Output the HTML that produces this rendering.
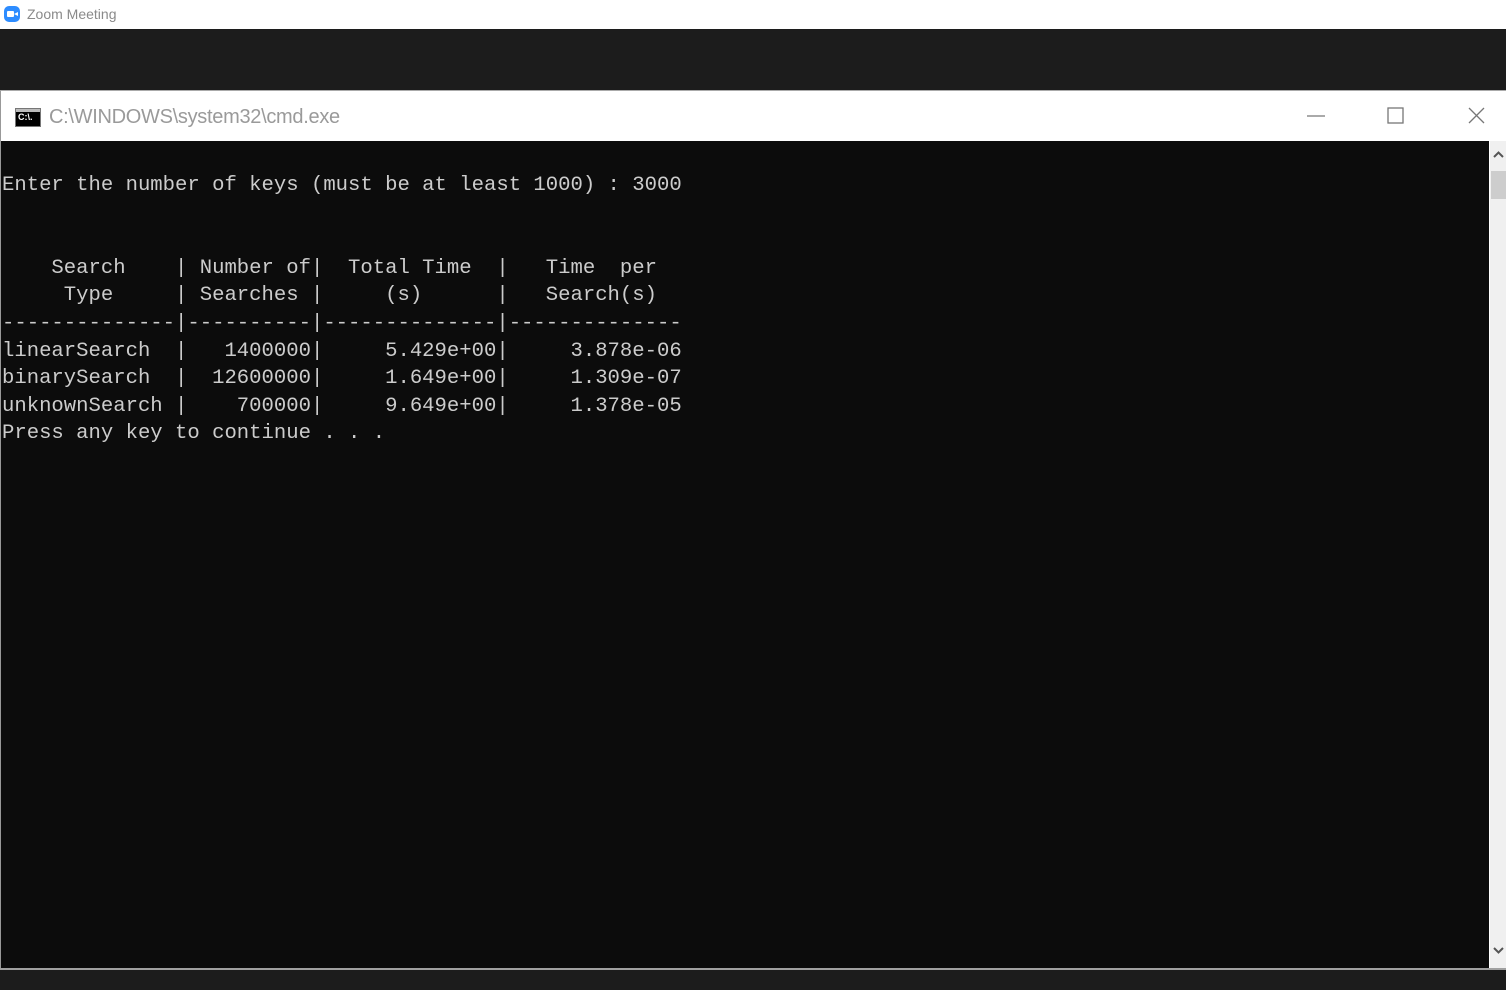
<!DOCTYPE html>
<html><head><meta charset="utf-8"><style>
html,body{margin:0;padding:0;width:1506px;height:990px;overflow:hidden;background:#1c1c1c;font-family:"Liberation Sans",sans-serif}
.top{position:absolute;left:0;top:0;width:1506px;height:29px;background:#fff}
.top .ic{position:absolute;left:4px;top:6px;width:16px;height:16px;border-radius:5px;background:#2d8cff}
.top .ic:after{content:"";position:absolute;left:3px;top:5px;width:7px;height:6px;background:#fff;border-radius:1px}
.top .ic:before{content:"";position:absolute;left:10px;top:6px;border-right:4px solid #fff;border-top:2px solid transparent;border-bottom:2px solid transparent;height:0}
.top span{position:absolute;left:27px;top:6px;font-size:14px;color:#8a8a8a}
.win{position:absolute;left:0;top:90px;width:1506px;height:879px;background:#fff;border-top:1px solid #aaa;border-left:1px solid #999}
.title{position:absolute;left:0;top:0;width:1506px;height:50px;background:#fff}
.cmdic{position:absolute;left:14px;top:17px;width:26px;height:19px;background:#000;border:1px solid #777;box-sizing:border-box}
.cmdic:before{content:"";position:absolute;left:0;top:0;right:0;height:3px;background:#bbb}
.cmdic:after{content:"C:\\.";position:absolute;left:2px;top:3px;font:bold 9px "Liberation Sans";color:#fff}
.ttl{position:absolute;left:48px;top:15px;font-size:20px;color:#9a9a9a;letter-spacing:-0.3px}
.con{position:absolute;left:0;top:50px;width:1488px;height:827px;background:#0c0c0c}
pre{margin:0;position:absolute;left:1px;top:31px;font-family:"Liberation Mono",monospace;font-size:20.6px;line-height:27.6px;color:#cccccc}
.sb{position:absolute;left:1489px;top:50px;width:17px;height:827px;background:#f0f0f0}
.thumb{position:absolute;left:1px;top:30px;width:16px;height:28px;background:#cdcdcd}
.bot{position:absolute;left:0;top:968px;width:1506px;height:2px;background:#a0a0a0}
</style></head><body>
<div class="top"><div class="ic"></div><span>Zoom Meeting</span></div>
<div class="win">
<div class="title"><div class="cmdic"></div><div class="ttl">C:\WINDOWS\system32\cmd.exe</div>
<svg style="position:absolute;left:1300px;top:12px" width="200" height="26">
<line x1="6" y1="13" x2="24" y2="13" stroke="#777" stroke-width="1.3"/>
<rect x="87" y="5" width="15" height="15" fill="none" stroke="#777" stroke-width="1.3"/>
<path d="M168 5 L183 20 M183 5 L168 20" stroke="#777" stroke-width="1.3"/>
</svg></div>
<div class="con"><pre>Enter the number of keys (must be at least 1000) : 3000


    Search    | Number of|  Total Time  |   Time  per
     Type     | Searches |     (s)      |   Search(s)
--------------|----------|--------------|--------------
linearSearch  |   1400000|     5.429e+00|     3.878e-06
binarySearch  |  12600000|     1.649e+00|     1.309e-07
unknownSearch |    700000|     9.649e+00|     1.378e-05
Press any key to continue . . .</pre></div>
<div class="sb"><svg width="17" height="20" style="position:absolute;top:5px"><path d="M4 11 L8.5 6.5 L13 11" fill="none" stroke="#555" stroke-width="2"/></svg><div class="thumb"></div>
<svg width="17" height="20" style="position:absolute;top:800px"><path d="M4 7 L8.5 11.5 L13 7" fill="none" stroke="#555" stroke-width="2"/></svg></div>
</div>
<div class="bot"></div>
</body></html>
